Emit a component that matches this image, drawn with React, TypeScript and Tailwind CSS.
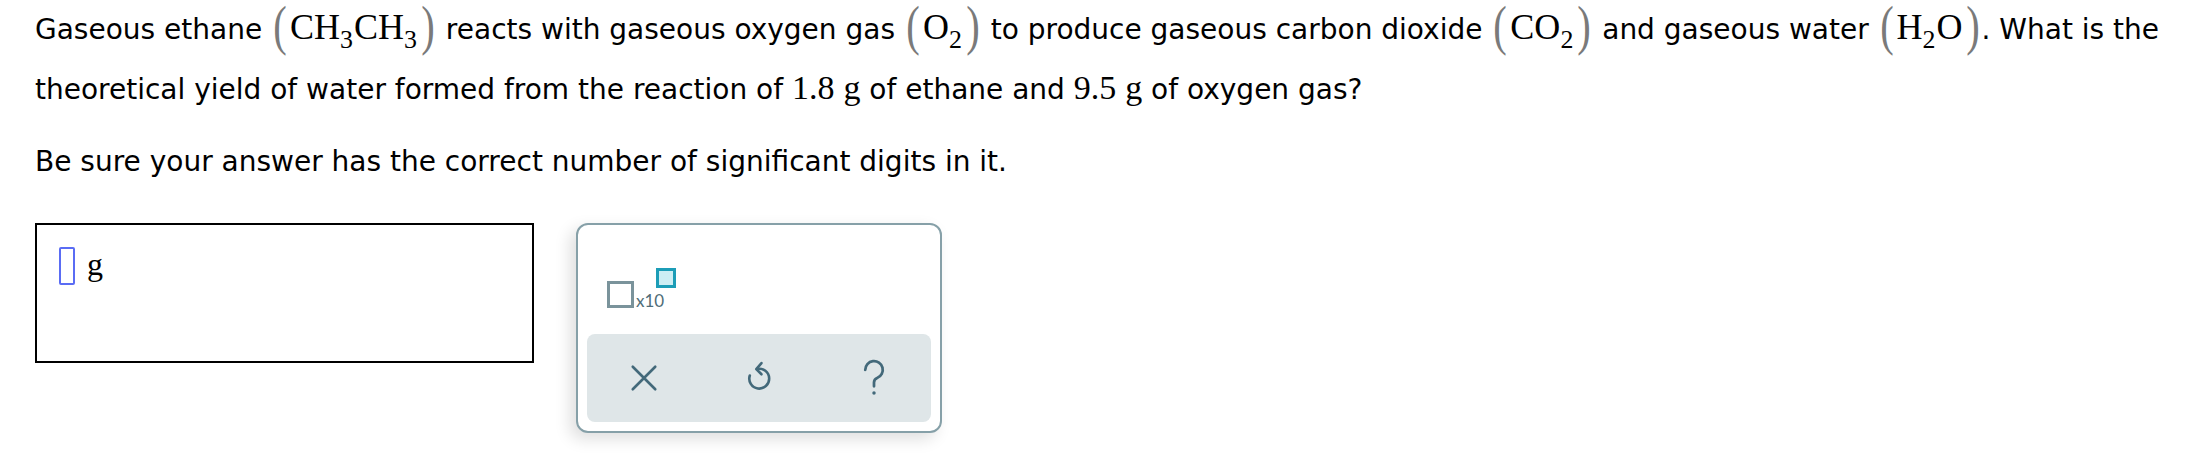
import React from "react";

const serif = "font-['Liberation_Serif','Times_New_Roman',serif]";

function Paren({ children }: { children: string }) {
  return (
    <span className={`${serif} inline-block text-[54px] leading-[40px] text-[#7a7a7a] relative top-[5px] scale-x-[0.75]`}>
      {children}
    </span>
  );
}

function Chem({ children }: { children: React.ReactNode }) {
  return (
    <span className="whitespace-nowrap">
      <Paren>(</Paren>
      <span className={`${serif} text-[36px] leading-[40px] px-[1px]`}>{children}</span>
      <Paren>)</Paren>
    </span>
  );
}

function Sub({ children }: { children: React.ReactNode }) {
  return <sub className="text-[0.72em] -bottom-[0.35em] pr-[1px]">{children}</sub>;
}

function Num({ children }: { children: React.ReactNode }) {
  return <span className={`${serif} text-[34px] leading-[40px]`}>{children}</span>;
}

function XIcon() {
  return (
    <svg width="30" height="30" viewBox="0 0 24 24" fill="none" stroke="#43697a" strokeWidth="2.1" strokeLinecap="round">
      <path d="M3 3L21 21M21 3L3 21" />
    </svg>
  );
}

function UndoIcon() {
  return (
    <svg width="30" height="36" viewBox="0 0 24 29" fill="none" stroke="#43697a" strokeWidth="2.1" strokeLinecap="round" strokeLinejoin="round">
      <path d="M4.6 12.5A8 8 0 1 0 10.5 7.2" />
      <path d="M14 2.5L9.8 7.3L14 11.5" />
    </svg>
  );
}

function HelpIcon() {
  return (
    <svg width="30" height="40" viewBox="0 0 24 32" fill="none" stroke="#43697a" strokeWidth="2.2" strokeLinecap="round">
      <path d="M5 9.5a7 7 0 1 1 9.5 6.5c-1.6.7-2.5 2-2.5 3.6v3" />
      <circle cx="12" cy="28" r="1.4" fill="#43697a" stroke="none" />
    </svg>
  );
}

export default function App() {
  return (
    <div className="w-[2196px] h-[470px] bg-white text-black pl-[35px] font-['DejaVu_Sans','Verdana',sans-serif] text-[28px] overflow-hidden">
      <p className="leading-[60px] whitespace-nowrap">
        Gaseous ethane{" "}
        <Chem>
          CH<Sub>3</Sub>CH<Sub>3</Sub>
        </Chem>{" "}
        reacts with gaseous oxygen gas{" "}
        <Chem>
          O<Sub>2</Sub>
        </Chem>{" "}
        to produce gaseous carbon dioxide{" "}
        <Chem>
          CO<Sub>2</Sub>
        </Chem>{" "}
        and gaseous water{" "}
        <Chem>
          H<Sub>2</Sub>O
        </Chem>
        . What is the
        <br />
        theoretical yield of water formed from the reaction of <Num>1.8</Num> <Num>g</Num> of ethane and{" "}
        <Num>9.5</Num> <Num>g</Num> of oxygen gas?
      </p>

      <p className="leading-[40px] mt-[22px]">Be sure your answer has the correct number of significant digits in it.</p>

      <div className="flex items-start gap-[42px] mt-[41px]">
        <div className="w-[499px] h-[140px] border-2 border-black flex items-start gap-[12px] pl-[22px] pt-[22px]">
          <div className="w-[16px] h-[38px] border-2 border-[#5a6cf4] rounded-[2px]" />
          <span className={`${serif} text-[32px] leading-[34px]`}>g</span>
        </div>

        <div className="w-[366px] h-[210px] rounded-[12px] border-2 border-[#86a0a8] bg-white shadow-[-6px_6px_16px_rgba(0,0,0,0.13)] flex flex-col justify-between px-[9px] pb-[9px]">
          <div className="h-[100px] pl-[20px] pt-[43px]">
            <div className="flex items-end">
              <div className="w-[27px] h-[27px] border-[3px] border-[#7a939b]" />
              <span className="font-['Lato',sans-serif] text-[17px] leading-[16px] text-[#4f6d78] ml-[2px] -mb-[1px]">x10</span>
              <div className="w-[20px] h-[20px] border-[3px] border-[#1c9db7] bg-[#cdeef4] -ml-[8px] mb-[20px]" />
            </div>
          </div>
          <div className="h-[88px] rounded-[8px] bg-[#dfe6e8] grid grid-cols-3 items-center justify-items-center">
            <XIcon />
            <UndoIcon />
            <HelpIcon />
          </div>
        </div>
      </div>
    </div>
  );
}
